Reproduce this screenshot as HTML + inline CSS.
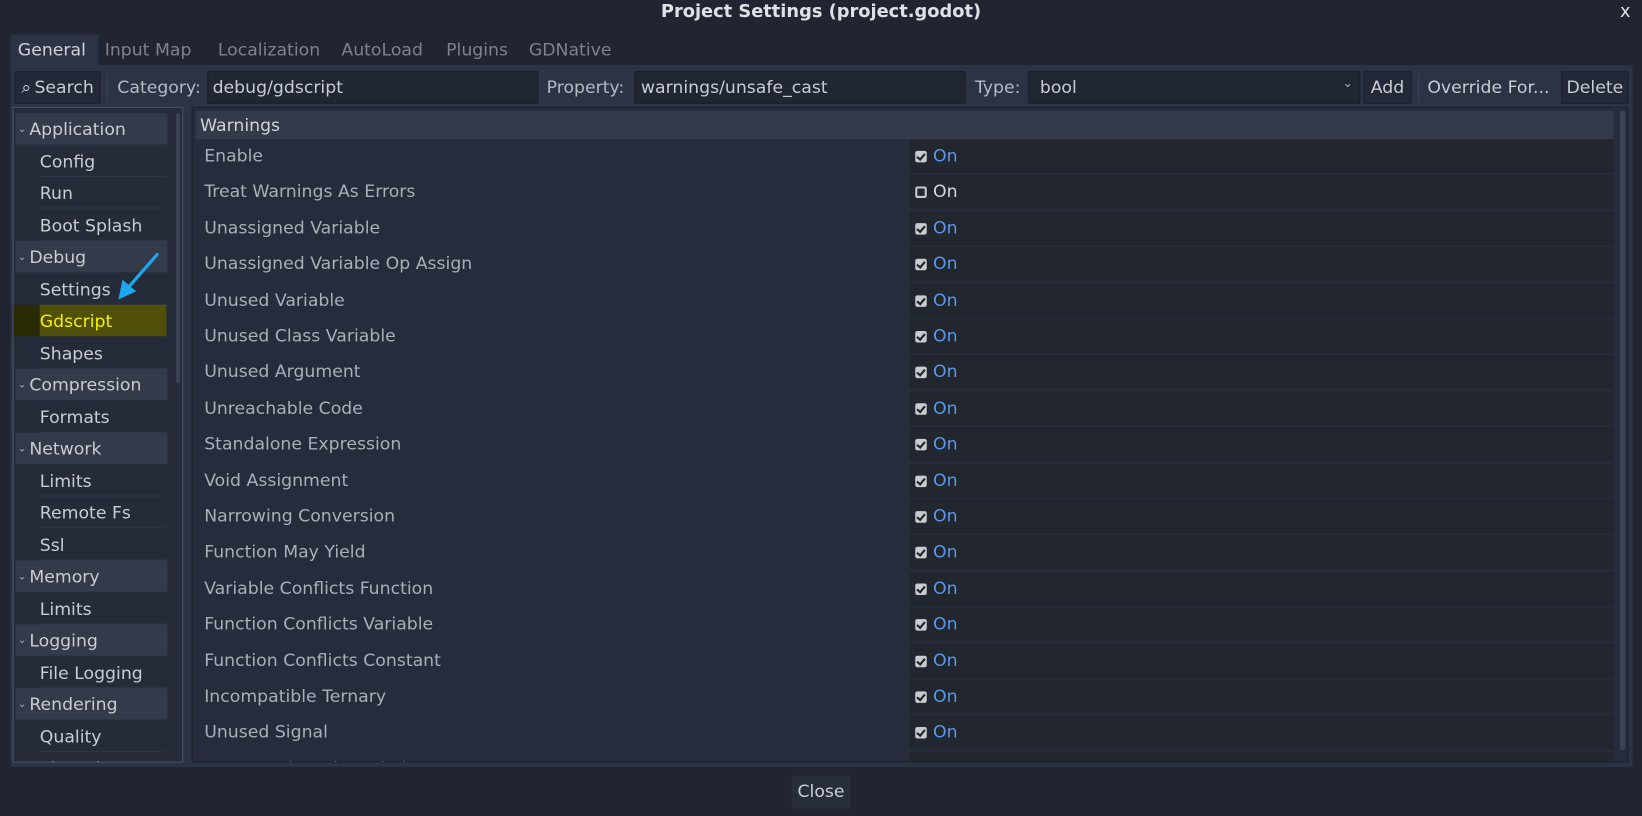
<!DOCTYPE html>
<html><head><meta charset="utf-8"><style>
html,body{margin:0;padding:0;background:#202531;overflow:hidden;width:1642px;height:816px}
#w{position:absolute;left:0;top:0;width:1568px;height:779px;transform:scale(1.04719,1.0475);transform-origin:0 0;font-family:"DejaVu Sans","Liberation Sans",sans-serif;font-size:16.5px;color:#c9ccd2}
.a{position:absolute;white-space:nowrap}
.title{left:0;width:1568px;top:1px;text-align:center;font-weight:bold;color:#dfe1e5;font-size:17px}
.tab{top:38px;color:#7d8290}
.box{position:absolute;background:#212633;border:1px solid #1a1e28;box-sizing:border-box}
.btn{position:absolute;background:#232938;border:1px solid #1b1f2a;box-sizing:border-box;text-align:center;line-height:30px}
.ti{position:absolute;left:3px;width:144px;height:30px;line-height:31px}
.hd{background:#333a4a;padding-left:13px;box-sizing:border-box;width:145px}
.it{left:26px;width:121px;padding-left:0;border-bottom:1px solid #2f3545;box-sizing:border-box;line-height:31px}
.ch{position:absolute;left:2px;top:0px;font-size:10px;color:#aab}
.row{position:absolute;left:0;width:1352px;height:32px}
.lbl{position:absolute;left:8px;top:6px;color:#a9aeb8}
.val{position:absolute;left:681px;top:0;width:673px;height:32px;background:#21262f}
.cb{position:absolute;left:6px;top:11px;width:11px;height:11px;background:#c8cbd0;border-radius:2px}
.cb:after{content:"";position:absolute;left:3px;top:1px;width:3px;height:6px;border:solid #222;border-width:0 2px 2px 0;transform:rotate(40deg)}
.cb.off{background:none;border:2px solid #c8cbd0;box-sizing:border-box}
.cb.off:after{display:none}
.on{position:absolute;left:23px;top:6px;color:#5a97e6}
.on.w{color:#d5d7dc}
</style></head><body><div id="w">
<div class="a title">Project Settings (project.godot)</div>
<div class="a" style="left:1547px;top:1px;font-size:17px;color:#dfe1e5">x</div>

<div class="a" style="left:10px;top:33px;width:84px;height:30px;background:#2c3345"></div>
<div class="a tab" style="left:17px;color:#cfd2d8">General</div>
<div class="a tab" style="left:100px">Input Map</div>
<div class="a tab" style="left:208px">Localization</div>
<div class="a tab" style="left:326px">AutoLoad</div>
<div class="a tab" style="left:426px">Plugins</div>
<div class="a tab" style="left:505px">GDNative</div>

<div class="a" style="left:10px;top:62px;width:1549px;height:670px;background:#2c3345"></div>

<div class="btn" style="left:14px;top:68px;width:82px;height:31px">&#x2315;&thinsp;Search</div>
<div class="a" style="left:102px;top:70px;width:1px;height:28px;background:#3a4256"></div>
<div class="a" style="left:112px;top:74px;color:#b5b9c2">Category:</div>
<div class="box" style="left:198px;top:68px;width:316px;height:31px"></div>
<div class="a" style="left:203px;top:74px">debug/gdscript</div>
<div class="a" style="left:522px;top:74px;color:#b5b9c2">Property:</div>
<div class="box" style="left:606px;top:68px;width:316px;height:31px"></div>
<div class="a" style="left:612px;top:74px">warnings/unsafe_cast</div>
<div class="a" style="left:931px;top:74px;color:#b5b9c2">Type:</div>
<div class="box" style="left:982px;top:68px;width:317px;height:31px"></div>
<div class="a" style="left:993px;top:74px">bool</div>
<div class="a" style="left:1282px;top:72px;font-size:12px;color:#aab">&#x2304;</div>
<div class="btn" style="left:1302px;top:68px;width:46px;height:31px">Add</div>
<div class="a" style="left:1354px;top:70px;width:1px;height:28px;background:#3a4256"></div>
<div class="a" style="left:1363px;top:74px">Override For...</div>
<div class="btn" style="left:1491px;top:68px;width:64px;height:31px">Delete</div>

<!-- left tree -->
<div class="a" style="left:12px;top:102px;width:163px;height:626px;background:#252b39;border:1px solid #4a5368;box-sizing:border-box;overflow:hidden">
<div class="a" style="left:155px;top:5px;width:4px;height:258px;background:#3c4354;border-radius:2px"></div>
<div style="position:absolute;left:-1px;top:5px">
<div class="ti hd" style="top:0"><span class="ch">&#x2304;</span>Application</div>
<div class="ti it" style="top:31px">Config</div>
<div class="ti it" style="top:61px">Run</div>
<div class="ti it" style="top:92px">Boot Splash</div>
<div class="ti hd" style="top:122px"><span class="ch">&#x2304;</span>Debug</div>
<div class="ti it" style="top:153px">Settings</div>
<div class="ti" style="top:183px;left:0;width:147px;background:#2a2a05"></div>
<div class="ti it" style="top:183px;background:#50500a;color:#f4f000;border:none">Gdscript</div>
<div class="ti it" style="top:214px">Shapes</div>
<div class="ti hd" style="top:244px"><span class="ch">&#x2304;</span>Compression</div>
<div class="ti it" style="top:275px">Formats</div>
<div class="ti hd" style="top:305px"><span class="ch">&#x2304;</span>Network</div>
<div class="ti it" style="top:336px">Limits</div>
<div class="ti it" style="top:366px">Remote Fs</div>
<div class="ti it" style="top:397px">Ssl</div>
<div class="ti hd" style="top:427px"><span class="ch">&#x2304;</span>Memory</div>
<div class="ti it" style="top:458px">Limits</div>
<div class="ti hd" style="top:488px"><span class="ch">&#x2304;</span>Logging</div>
<div class="ti it" style="top:519px">File Logging</div>
<div class="ti hd" style="top:549px"><span class="ch">&#x2304;</span>Rendering</div>
<div class="ti it" style="top:580px">Quality</div>
<div class="ti it" style="top:610px">Threads</div>
</div></div>

<svg class="a" style="left:100px;top:235px" width="60" height="60"><line x1="50" y1="8" x2="22" y2="40" stroke="#1aa8f0" stroke-width="3" stroke-linecap="round"/><polygon points="13,51 17,32 30,43" fill="#1aa8f0"/></svg>

<!-- right -->
<div class="a" style="left:183px;top:102px;width:1372px;height:626px;background:#262c3b;border:1px solid #1c202a;box-sizing:border-box;overflow:hidden">
<div class="a" style="left:1363px;top:3px;width:5px;height:610px;background:#3c4354;border-radius:2px"></div>
<div class="a" style="left:3px;top:3px;width:1354px;height:27px;background:#333a4a"></div>
<div class="a" style="left:7px;top:7px;color:#cfd2d8">Warnings</div>
<div style="position:absolute;left:3px;top:30px">
<div class="row" style="top:0"><span class="lbl">Enable</span><div class="val"><div class="cb"></div><span class="on">On</span></div></div>
<div class="row" style="top:34.4px"><span class="lbl">Treat Warnings As Errors</span><div class="val"><div class="cb off"></div><span class="on w">On</span></div></div>
<div class="row" style="top:68.8px"><span class="lbl">Unassigned Variable</span><div class="val"><div class="cb"></div><span class="on">On</span></div></div>
<div class="row" style="top:103.2px"><span class="lbl">Unassigned Variable Op Assign</span><div class="val"><div class="cb"></div><span class="on">On</span></div></div>
<div class="row" style="top:137.6px"><span class="lbl">Unused Variable</span><div class="val"><div class="cb"></div><span class="on">On</span></div></div>
<div class="row" style="top:172px"><span class="lbl">Unused Class Variable</span><div class="val"><div class="cb"></div><span class="on">On</span></div></div>
<div class="row" style="top:206.4px"><span class="lbl">Unused Argument</span><div class="val"><div class="cb"></div><span class="on">On</span></div></div>
<div class="row" style="top:240.8px"><span class="lbl">Unreachable Code</span><div class="val"><div class="cb"></div><span class="on">On</span></div></div>
<div class="row" style="top:275.2px"><span class="lbl">Standalone Expression</span><div class="val"><div class="cb"></div><span class="on">On</span></div></div>
<div class="row" style="top:309.6px"><span class="lbl">Void Assignment</span><div class="val"><div class="cb"></div><span class="on">On</span></div></div>
<div class="row" style="top:344px"><span class="lbl">Narrowing Conversion</span><div class="val"><div class="cb"></div><span class="on">On</span></div></div>
<div class="row" style="top:378.4px"><span class="lbl">Function May Yield</span><div class="val"><div class="cb"></div><span class="on">On</span></div></div>
<div class="row" style="top:412.8px"><span class="lbl">Variable Conflicts Function</span><div class="val"><div class="cb"></div><span class="on">On</span></div></div>
<div class="row" style="top:447.2px"><span class="lbl">Function Conflicts Variable</span><div class="val"><div class="cb"></div><span class="on">On</span></div></div>
<div class="row" style="top:481.6px"><span class="lbl">Function Conflicts Constant</span><div class="val"><div class="cb"></div><span class="on">On</span></div></div>
<div class="row" style="top:516px"><span class="lbl">Incompatible Ternary</span><div class="val"><div class="cb"></div><span class="on">On</span></div></div>
<div class="row" style="top:550.4px"><span class="lbl">Unused Signal</span><div class="val"><div class="cb"></div><span class="on">On</span></div></div>
<div class="row" style="top:584.8px"><span class="lbl">Return Value Discarded</span><div class="val"><div class="cb"></div><span class="on">On</span></div></div>
</div></div>

<div class="btn" style="left:756px;top:740px;width:56px;height:32px;background:#282d3a;border:none;line-height:32px">Close</div>
</div></body></html>
